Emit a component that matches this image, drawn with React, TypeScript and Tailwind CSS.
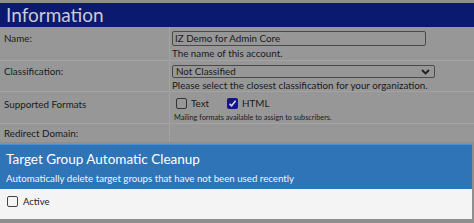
import React from "react";

export default function App() {
  return (
    <div className="w-[474px] h-[223px] bg-[#8f8f8f] overflow-hidden pt-[3px]" style={{ fontFamily: 'Lato, "Noto Sans", sans-serif' }}>
      <div className="h-[24px] bg-[#0b1a6e] text-[#c9cbd8] text-[19px] leading-[24px] pl-[6px]">Information</div>
      <div className="bg-[#979797] text-[#1a1a1a] text-[9.8px]">
        <div className="flex border-b border-[#a3a3a3] h-[34px]">
          <div className="w-[170px] shrink-0 border-r border-[#a3a3a3] pl-[4px] pt-[5px] leading-[13px]">Name:</div>
          <div className="pl-[2px] pt-[4px]">
            <div className="w-[254px] h-[15px] border border-[#4a4a4a] rounded-[2px] leading-[13px] pl-[2px]">IZ Demo for Admin Core</div>
            <div className="leading-[13px] mt-[1px] whitespace-nowrap">The name of this account.</div>
          </div>
        </div>
        <div className="flex border-b border-[#a3a3a3] h-[31px]">
          <div className="w-[170px] shrink-0 border-r border-[#a3a3a3] pl-[4px] pt-[4px] leading-[13px]">Classification:</div>
          <div className="pl-[2px] pt-[4px]">
            <div className="w-[263px] h-[13px] border border-[#4a4a4a] rounded-[2px] leading-[11px] pl-[3px] flex items-center justify-between pr-[4px]">
              <span>Not Classified</span>
              <svg width="9" height="6" viewBox="0 0 9 6"><path d="M1 1 L4.5 4.5 L8 1" stroke="#1f1f1f" strokeWidth="1.8" fill="none" /></svg>
            </div>
            <div className="leading-[13px] mt-[1px] whitespace-nowrap">Please select the closest classification for your organization.</div>
          </div>
        </div>
        <div className="flex border-b border-[#a3a3a3] h-[32px]">
          <div className="w-[170px] shrink-0 border-r border-[#a3a3a3] pl-[4px] pt-[6px] leading-[13px]">Supported Formats</div>
          <div className="pl-[6px] pt-[5px]">
            <div className="flex items-center leading-[13px] whitespace-nowrap">
              <span className="w-[11px] h-[11px] border border-[#333] rounded-[2px] mr-[4px]"></span>
              <span>Text</span>
              <span className="w-[11px] h-[11px] rounded-[2px] bg-[#13138a] ml-[18px] mr-[4px] flex items-center justify-center">
                <svg width="9" height="9" viewBox="0 0 9 9"><path d="M1.5 4.8 L3.6 6.8 L7.6 1.8" stroke="#d8d8e8" strokeWidth="1.6" fill="none" /></svg>
              </span>
              <span>HTML</span>
            </div>
            <div className="text-[7.3px] leading-[10px] mt-[3px] -ml-[2px] whitespace-nowrap">Mailing formats available to assign to subscribers.</div>
          </div>
        </div>
        <div className="flex h-[18px]">
          <div className="w-[170px] shrink-0 border-r border-[#a3a3a3] pl-[4px] pt-[3px] leading-[13px]">Redirect Domain:</div>
        </div>
      </div>
      <div className="h-[2px] bg-[#8f8f8f]"></div>
      <div className="w-[472px] bg-[#2e74b7] h-[45px] border-t border-[#4a90d0] text-white">
        <div className="pl-[6px] pt-[5px] text-[13.5px] leading-[18px]">Target Group Automatic Cleanup</div>
        <div className="pl-[6px] pt-[4px] text-[9.7px] leading-[13px] text-[#eef4fb]">Automatically delete target groups that have not been used recently</div>
      </div>
      <div className="w-[472px] bg-[#f4f4f4] h-[30px] flex items-start pl-[7px] pt-[7px] text-[9.5px] text-[#222]">
        <span className="w-[11px] h-[11px] border border-[#444] rounded-[2px] mr-[5px]"></span>
        <span className="leading-[12px]">Active</span>
      </div>
    </div>
  );
}
